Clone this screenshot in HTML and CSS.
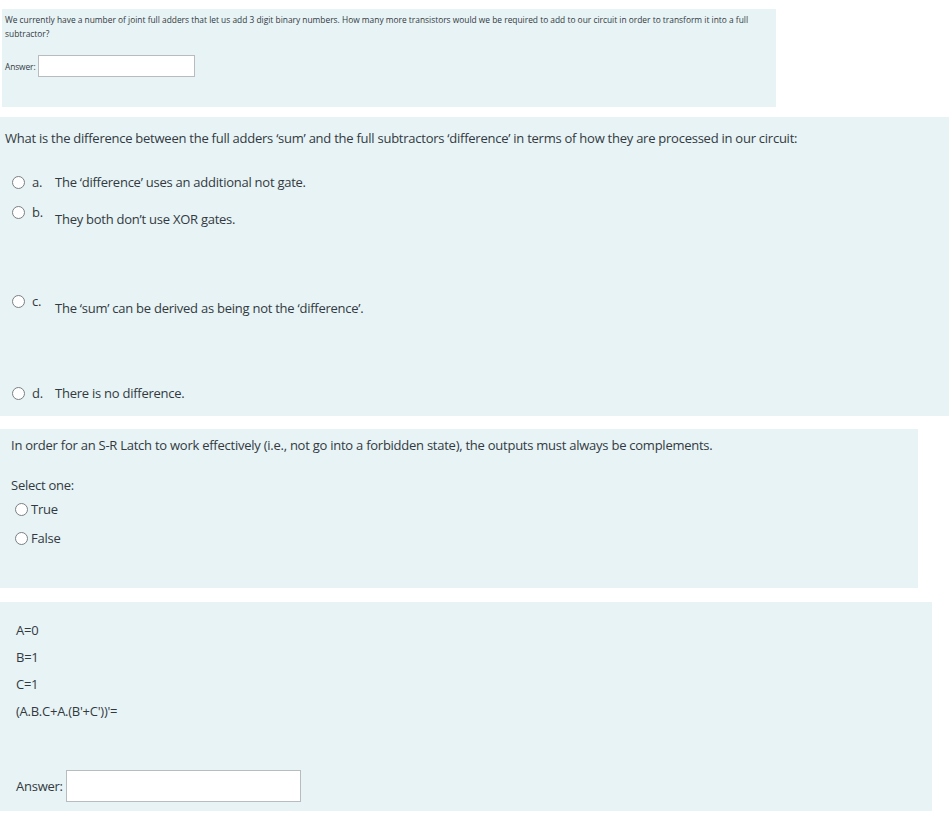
FILE: index.html
```html
<!DOCTYPE html>
<html>
<head>
<meta charset="utf-8">
<link rel="stylesheet" href="styles.css">
</head>
<body>
<div class="panel p1">
  <div class="small-text">We currently have a number of joint full adders that let us add 3 digit binary numbers. How many more transistors would we be required to add to our circuit in order to transform it into a full subtractor?</div>
  <div class="answer small">
    <span class="answer-label">Answer:</span>
    <span class="input input-small"></span>
  </div>
</div>

<div class="panel p2">
  <div class="qtext">What is the difference between the full adders ‘sum’ and the full subtractors ‘difference’ in terms of how they are processed in our circuit:</div>
  <div class="options">
    <div class="opt opt-a">
      <span class="radio"></span><span class="letter">a.</span><span class="otext">The ‘difference’ uses an additional not gate.</span>
    </div>
    <div class="opt opt-b">
      <span class="radio"></span><span class="letter">b.</span><span class="otext shifted">They both don’t use XOR gates.</span>
    </div>
    <div class="opt opt-c">
      <span class="radio"></span><span class="letter">c.</span><span class="otext shifted">The ‘sum’ can be derived as being not the ‘difference’.</span>
    </div>
    <div class="opt opt-d">
      <span class="radio"></span><span class="letter">d.</span><span class="otext">There is no difference.</span>
    </div>
  </div>
</div>

<div class="panel p3">
  <div class="qtext">In order for an S-R Latch to work effectively (i.e., not go into a forbidden state), the outputs must always be complements.</div>
  <div class="select-one">Select one:</div>
  <div class="tf"><span class="radio"></span><span>True</span></div>
  <div class="tf"><span class="radio"></span><span>False</span></div>
</div>

<div class="panel p4">
  <div class="line">A=0</div>
  <div class="line">B=1</div>
  <div class="line">C=1</div>
  <div class="line">(A.B.C+A.(B'+C'))'=</div>
  <div class="answer big">
    <span class="answer-label">Answer:</span>
    <span class="input input-big"></span>
  </div>
</div>
</body>
</html>
```

FILE: styles.css
```css
html, body {
  margin: 0;
  padding: 0;
  background: #ffffff;
}
body {
  font-family: "Open Sans", "Noto Sans", sans-serif;
  color: #333a3f;
}
.panel {
  background: #e7f3f5;
  box-sizing: border-box;
}
.p1 {
  margin: 9px 0 0 2px;
  width: 774px;
  height: 98px;
  padding: 4px 18px 0 3px;
}
.small-text {
  font-size: 8.4px;
  line-height: 14px;
  letter-spacing: 0;
}
.answer {
  display: flex;
  align-items: center;
}
.answer.small {
  margin-top: 14px;
  font-size: 8.4px;
  letter-spacing: -0.1px;
}
.answer-label {
  margin-right: 2px;
}
.input {
  display: block;
  background: #ffffff;
  border: 1px solid #b8bcbf;
  box-sizing: border-box;
}
.input-small {
  width: 157px;
  height: 22px;
}
.p2 {
  margin-top: 10px;
  width: 949px;
  height: 299px;
  padding: 12px 0 0 5px;
}
.qtext, .opt, .select-one, .tf, .line, .answer.big {
  font-size: 13px;
  line-height: 18px;
  letter-spacing: -0.25px;
}
.options {
  margin-top: 26px;
}
.opt {
  display: flex;
  align-items: flex-start;
}
.opt .radio {
  margin: 3px 0 0 7px;
}
.letter {
  width: 23px;
  margin-left: 7px;
  flex: none;
}
.shifted {
  padding-top: 7px;
}
.opt-a { height: 30px; }
.opt-b { height: 89px; }
.opt-c { height: 92px; }
.radio {
  display: block;
  flex: none;
  width: 11px;
  height: 11px;
  border: 1px solid #7b7f83;
  border-radius: 50%;
  background: #ffffff;
}
.p3 {
  margin-top: 13px;
  width: 918px;
  height: 159px;
  padding: 7px 0 0 11px;
}
.select-one {
  margin-top: 22px;
}
.tf {
  display: flex;
  align-items: center;
  margin-top: 6px;
  margin-left: 4px;
}
.tf + .tf {
  margin-top: 11px;
}
.tf .radio {
  margin-right: 3px;
}
.p4 {
  margin-top: 14px;
  width: 932px;
  height: 209px;
  padding: 19px 0 0 16px;
}
.line {
  margin-bottom: 9px;
}
.answer.big {
  margin-top: 50px;
}
.input-big {
  width: 235px;
  height: 32px;
  margin-left: 1px;
}
```
